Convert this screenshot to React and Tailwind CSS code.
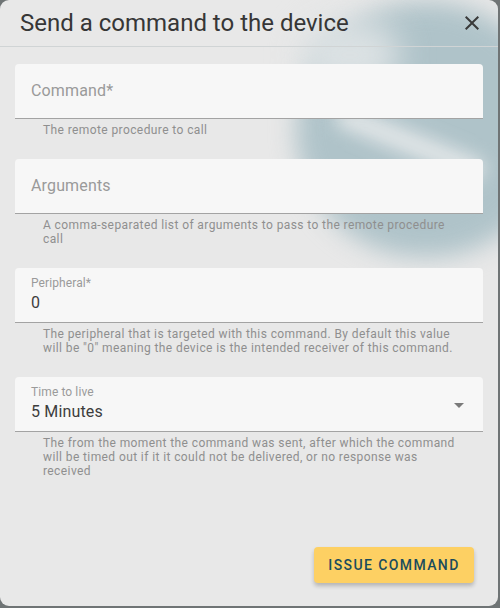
import React from "react";

const helper = "mx-[28px] mt-[4px] text-[12px] leading-[14px] tracking-[0.4px] text-[#8f8f8f]";

function EmptyField({ label, hint }) {
  return (
    <div className="mx-[15px]">
      <div className="h-[55px] rounded-t-[4px] bg-[#f7f7f7] border-b border-[#a3a3a3] flex items-center px-[16px]">
        <span className="text-[16px] text-[#9a9a9a] tracking-[0.15px]">{label}</span>
      </div>
      <p className={helper}>{hint}</p>
    </div>
  );
}

function FilledField({ label, value, hint, select }) {
  return (
    <div className="mx-[15px]">
      <div className="h-[55px] rounded-t-[4px] bg-[#f7f7f7] border-b border-[#a3a3a3] flex items-start px-[16px]">
        <div className="flex-1 flex flex-col pt-[8px]">
          <span className="text-[12px] leading-[14px] text-[#9a9a9a] tracking-[0.1px]">{label}</span>
          <span className="mt-[3px] text-[16px] leading-[19px] text-[#3d3d3d] tracking-[0.15px]">{value}</span>
        </div>
        {select && (
          <svg viewBox="0 0 24 24" className="w-[24px] h-[24px] mt-[16px] -mr-[4px] fill-[#7a7a7a]">
            <path d="M7 10l5 5 5-5z" />
          </svg>
        )}
      </div>
      <p className={helper}>{hint}</p>
    </div>
  );
}

export default function App() {
  return (
    <div className="w-[500px] h-[608px] bg-[#6f7475] overflow-hidden" style={{ fontFamily: "Roboto, 'Liberation Sans', sans-serif" }}>
      <div className="relative w-[498px] h-[606px] rounded-[9px] bg-[#e8e8e8] overflow-hidden flex flex-col">
        {/* backdrop blob showing through the dialog */}
        <div className="absolute left-[296px] top-[2px] w-[260px] h-[255px] rounded-full bg-[#afc3c9] blur-[12px] pointer-events-none"></div>
        <div className="absolute left-[330px] top-[132px] w-[160px] h-[22px] rounded-full bg-[#e3e7e8] blur-[9px] rotate-[22deg] pointer-events-none"></div>
        <div className="absolute left-[300px] top-[20px] w-[100px] h-[70px] rounded-full bg-[#dbe1e3] blur-[16px] pointer-events-none"></div>

        <div className="relative z-10 flex flex-col flex-1">
          <div className="h-[47px] border-b border-[#d0d4d5] flex items-center justify-between pl-[20px] pr-[14px]">
            <h2 className="text-[24px] leading-[30px] text-[#363636] tracking-[0px]">Send a command to the device</h2>
            <svg viewBox="0 0 24 24" className="w-[24px] h-[24px] fill-[#3a3a3a]">
              <path d="M19 6.41 17.59 5 12 10.59 6.41 5 5 6.41 10.59 12 5 17.59 6.41 19 12 13.41 17.59 19 19 17.59 13.41 12z" />
            </svg>
          </div>

          <div className="flex flex-col gap-[22px] pt-[17px]">
            <EmptyField label="Command*" hint="The remote procedure to call" />
            <EmptyField label="Arguments" hint="A comma-separated list of arguments to pass to the remote procedure call" />
            <FilledField
              label="Peripheral*"
              value="0"
              hint={'The peripheral that is targeted with this command. By default this value will be "0" meaning the device is the intended receiver of this command.'}
            />
            <FilledField
              label="Time to live"
              value="5 Minutes"
              select
              hint="The from the moment the command was sent, after which the command will be timed out if it it could not be delivered, or no response was received"
            />
          </div>

          <div className="mt-auto flex justify-end pr-[24px] pb-[23px]">
            <button className="w-[160px] h-[36px] rounded-[4px] bg-[#fdd063] text-[#1a4c5c] text-[14px] font-medium tracking-[1.4px] shadow-[0_3px_4px_rgba(0,0,0,0.22)]">
              ISSUE COMMAND
            </button>
          </div>
        </div>
      </div>
    </div>
  );
}
